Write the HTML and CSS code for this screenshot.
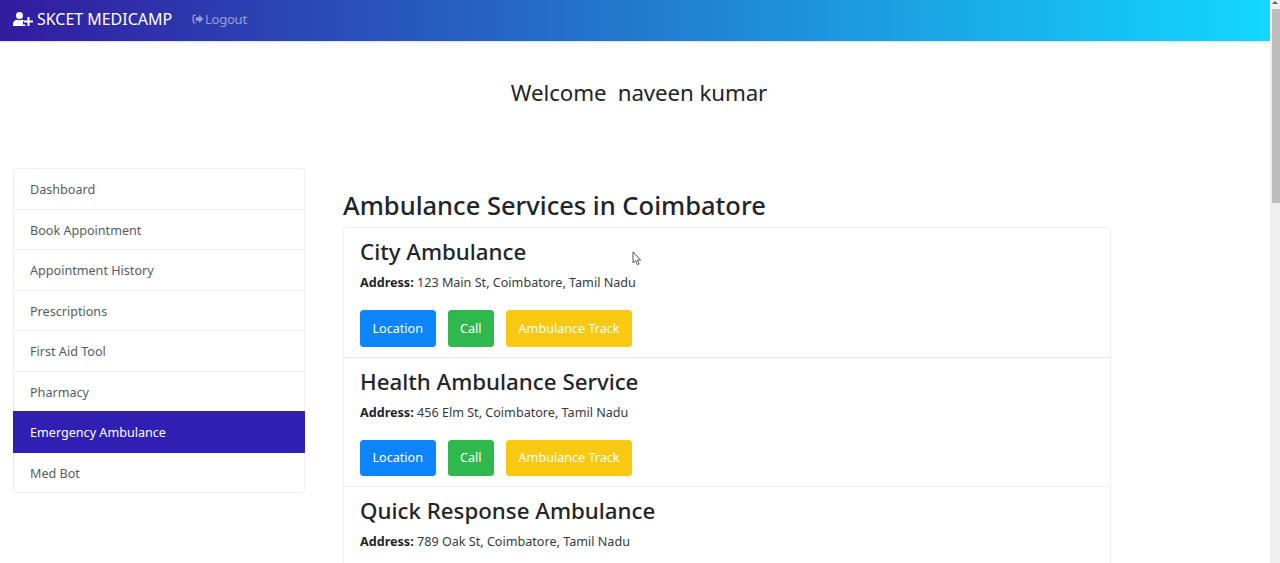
FILE: index.html
```html
<!DOCTYPE html>
<html lang="en">
<head>
    <meta charset="UTF-8">
    <meta name="viewport" content="width=device-width, initial-scale=1.0">
    <title>Ambulance Services</title>
    <link rel="stylesheet" href="styles.css">
</head>
<body>
    <div class="page">
        <nav class="navbar">
            <a class="brand" href="#">
                <svg class="brand-icon" viewBox="0 0 20 14" width="20" height="14">
                    <circle cx="6.500" cy="3.500" r="3.500" fill="#fff"/>
                    <path d="M0 14v-1.800C0 9.500 2 7.800 4 7.800c1.200.6 3.800.6 5 0 .6 0 1.200.1 1.700.4v1.300H10v3h2.500V14z" fill="#fff"/>
                    <path d="M14.500 5h2v3.500H20v2h-3.500V14h-2v-3.500H11v-2h3.500z" fill="#fff"/>
                </svg>
                SKCET MEDICAMP
            </a>
            <a class="logout" href="#">
                <svg class="logout-icon" viewBox="0 0 13 11" width="12" height="10">
                    <path d="M4 .500H2.500A2 2 0 0 0 .500 2.500v6a2 2 0 0 0 2 2H4V9H2.500a.5.5 0 0 1-.5-.5v-6A.5.5 0 0 1 2.500 2H4z" fill="currentColor"/>
                    <path d="M7.500 1 12.500 5.500 7.500 10V7.500H4v-4h3.500z" fill="currentColor"/>
                </svg><span>Logout</span>
            </a>
        </nav>

        <h2 class="welcome">Welcome&nbsp; naveen kumar</h2>

        <div class="content">
            <ul class="sidebar">
                <li class="side-item">Dashboard</li>
                <li class="side-item">Book Appointment</li>
                <li class="side-item">Appointment History</li>
                <li class="side-item">Prescriptions</li>
                <li class="side-item">First Aid Tool</li>
                <li class="side-item">Pharmacy</li>
                <li class="side-item active">Emergency Ambulance</li>
                <li class="side-item">Med Bot</li>
            </ul>

            <main class="main">
                <h1 class="title">Ambulance Services in Coimbatore</h1>
                <div class="card-list">
                    <div class="service">
                        <h3>City Ambulance</h3>
                        <p><strong>Address:</strong> 123 Main St, Coimbatore, Tamil Nadu</p>
                        <div class="actions">
                            <a class="btn blue" href="#">Location</a>
                            <a class="btn green" href="#">Call</a>
                            <a class="btn yellow" href="#">Ambulance Track</a>
                        </div>
                    </div>
                    <div class="service">
                        <h3>Health Ambulance Service</h3>
                        <p><strong>Address:</strong> 456 Elm St, Coimbatore, Tamil Nadu</p>
                        <div class="actions">
                            <a class="btn blue" href="#">Location</a>
                            <a class="btn green" href="#">Call</a>
                            <a class="btn yellow" href="#">Ambulance Track</a>
                        </div>
                    </div>
                    <div class="service">
                        <h3>Quick Response Ambulance</h3>
                        <p><strong>Address:</strong> 789 Oak St, Coimbatore, Tamil Nadu</p>
                    </div>
                </div>
            </main>
        </div>
    </div>

    <div class="scrollbar">
        <div class="scroll-arrow"></div>
        <div class="scroll-thumb"></div>
    </div>

    <svg class="cursor" viewBox="0 0 10 15" width="10" height="15">
        <path d="M1 1v11l2.500-2.300 1.800 4 1.800-.8-1.800-3.900h3.300z" fill="#fff" stroke="#555" stroke-width="1"/>
    </svg>
</body>
</html>
```

FILE: styles.css
```css
html, body {
    margin: 0;
    height: 563px;
    overflow: hidden;
    background: #ffffff;
}

body {
    font-family: "Noto Sans", "Open Sans", sans-serif;
    color: #212529;
}

.page {
    width: 1270px;
}

.navbar {
    height: 41px;
    box-sizing: border-box;
    display: flex;
    align-items: center;
    gap: 20px;
    padding: 0 13px 4px;
    background: linear-gradient(90deg, #321b9f, #12d8ff);
    box-shadow: 0 1px 2px rgba(0, 0, 0, 0.15);
}

.navbar a {
    text-decoration: none;
}

.brand {
    display: flex;
    align-items: center;
    gap: 4px;
    color: #ffffff;
    font-size: 16px;
    letter-spacing: -0.03px;
}

.logout {
    display: flex;
    align-items: center;
    color: rgba(255, 255, 255, 0.5);
    font-size: 13px;
    letter-spacing: -0.25px;
}

.logout-icon {
    margin: 1px 1px 0 0;
    flex-shrink: 0;
}

.welcome {
    margin: 0;
    padding: 37px 0 0 8px;
    height: 127px;
    box-sizing: border-box;
    text-align: center;
    font-size: 22.3px;
    font-weight: 400;
    line-height: 29px;
    letter-spacing: -0.1px;
}

.content {
    display: flex;
    align-items: flex-start;
    gap: 38px;
    padding-left: 13px;
}

.sidebar {
    list-style: none;
    margin: 0;
    padding: 0;
    width: 292px;
    flex-shrink: 0;
}

.side-item {
    height: 41.5px;
    margin-top: -1px;
    box-sizing: border-box;
    display: flex;
    align-items: center;
    padding: 2px 0 0 16px;
    font-size: 12.6px;
    color: #555c63;
    border: 1px solid #f0f0f0;
}

.side-item:first-child {
    margin-top: 0;
    border-radius: 3px 3px 0 0;
}

.side-item:last-child {
    border-radius: 0 0 3px 3px;
}

.side-item.active {
    position: relative;
    background: #311fb4;
    color: #ffffff;
    border-color: #311fb4;
}

.main {
    width: 768px;
}

.title {
    margin: 17px 0 1px;
    font-size: 25.5px;
    font-weight: 500;
    line-height: 41px;
    height: 41px;
}

.card-list {
    border: 1px solid #f0f0f0;
    border-bottom: 0;
    border-radius: 3px 3px 0 0;
}

.service {
    height: 129.600px;
    box-sizing: border-box;
    padding: 8px 16px 0;
    border-bottom: 1px solid #e6e6e6;
}

.service:nth-child(2) {
    border-bottom-color: #f0f0f0;
}

.service:last-child {
    height: 77px;
    border-bottom: 0;
}

.service h3 {
    margin: 0;
    font-size: 22.3px;
    font-weight: 500;
    line-height: 32px;
}

.service p {
    margin: 5px 0 0;
    font-size: 12.6px;
    line-height: 20px;
    color: #343a40;
}

.service strong {
    color: #212529;
}

.actions {
    display: flex;
    gap: 12px;
    margin-top: 17px;
}

.btn {
    height: 36.700px;
    box-sizing: border-box;
    display: flex;
    align-items: center;
    padding: 0 12.500px;
    border-radius: 3.500px;
    color: #ffffff;
    font-size: 12.6px;
    text-decoration: none;
}

.blue {
    background: #0c84fb;
}

.green {
    background: #2fb84d;
}

.yellow {
    background: #f9c811;
}

.scrollbar {
    position: fixed;
    top: 0;
    right: 0;
    bottom: 0;
    width: 10px;
    background: #efefef;
}

.scroll-arrow {
    height: 9px;
    position: relative;
}

.scroll-arrow::before {
    content: "";
    position: absolute;
    top: 1px;
    left: 2px;
    border-left: 3px solid transparent;
    border-right: 3px solid transparent;
    border-bottom: 3px solid #666666;
}

.scroll-thumb {
    margin-left: 2px;
    height: 194px;
    background: #bdbdbd;
}

.cursor {
    position: fixed;
    left: 632px;
    top: 251px;
}
```
